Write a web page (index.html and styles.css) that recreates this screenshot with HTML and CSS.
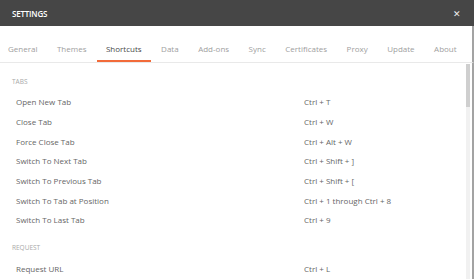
FILE: index.html
```html
<!DOCTYPE html>
<html lang="en">
<head>
  <meta charset="UTF-8" />
  <title>Settings</title>
  <link rel="stylesheet" href="styles.css">
</head>
<body>
  <div class="modal">
    <div class="modal-header">
      <span class="modal-title">SETTINGS</span>
      <span class="close">&#x2715;</span>
    </div>

    <div class="tabs">
      <span class="tab">General</span>
      <span class="tab">Themes</span>
      <span class="tab active">Shortcuts</span>
      <span class="tab">Data</span>
      <span class="tab">Add-ons</span>
      <span class="tab">Sync</span>
      <span class="tab">Certificates</span>
      <span class="tab">Proxy</span>
      <span class="tab">Update</span>
      <span class="tab">About</span>
    </div>

    <div class="body">
      <div class="content">
        <div class="section-title">TABS</div>
        <div class="row"><span class="name">Open New Tab</span><span class="keys">Ctrl + T</span></div>
        <div class="row"><span class="name">Close Tab</span><span class="keys">Ctrl + W</span></div>
        <div class="row"><span class="name">Force Close Tab</span><span class="keys">Ctrl + Alt + W</span></div>
        <div class="row"><span class="name">Switch To Next Tab</span><span class="keys">Ctrl + Shift + ]</span></div>
        <div class="row"><span class="name">Switch To Previous Tab</span><span class="keys">Ctrl + Shift + [</span></div>
        <div class="row"><span class="name">Switch To Tab at Position</span><span class="keys">Ctrl + 1 through Ctrl + 8</span></div>
        <div class="row"><span class="name">Switch To Last Tab</span><span class="keys">Ctrl + 9</span></div>

        <div class="section-title request">REQUEST</div>
        <div class="row"><span class="name">Request URL</span><span class="keys">Ctrl + L</span></div>
      </div>
      <div class="scrollbar"><div class="thumb"></div></div>
    </div>
  </div>
</body>
</html>
```

FILE: styles.css
```css
body {
  margin: 0;
  font-family: 'Open Sans', sans-serif;
  background: #fff;
  overflow: hidden;
}

.modal {
  width: 474px;
  height: 279px;
  display: flex;
  flex-direction: column;
}

.modal-header {
  height: 26px;
  flex-shrink: 0;
  background: #464646;
  display: flex;
  align-items: center;
  justify-content: space-between;
  padding: 0 13px 0 12px;
  color: #fff;
}

.modal-title {
  font-size: 8px;
  font-weight: 600;
  letter-spacing: -0.2px;
}

.close {
  font-size: 9px;
  color: #eee;
}

.tabs {
  display: flex;
  height: 36px;
  flex-shrink: 0;
  padding-left: 8px;
  border-bottom: 1px solid #e9e9e9;
  border-right: 2px solid #a3a3a3;
}

.tab {
  font-size: 8px;
  color: #a0a0a0;
  padding-top: 17px;
  margin-right: 19.5px;
  white-space: nowrap;
  box-sizing: border-box;
}

.tab.active {
  color: #4a4a4a;
  border-bottom: 2px solid #f26b3a;
  padding: 17px 9px 0;
  margin-left: -9px;
  margin-right: 10.5px;
}

.body {
  flex: 1;
  display: flex;
  border-right: 2px solid #a3a3a3;
}

.content {
  flex: 1;
  padding: 14px 0 0 12px;
}

.section-title {
  font-size: 6.5px;
  color: #a9a9a9;
  height: 15px;
}

.section-title.request {
  margin-top: 13px;
  height: 16px;
}

.row {
  display: flex;
  height: 19.7px;
  align-items: center;
  font-size: 8px;
  color: #666;
  padding-left: 4px;
}

.name {
  width: 288px;
}

.scrollbar {
  width: 4px;
  margin: 1px 2px 0 0;
  background: #f1f1f1;
}

.thumb {
  height: 43px;
  background: #cfcfcf;
}
```
